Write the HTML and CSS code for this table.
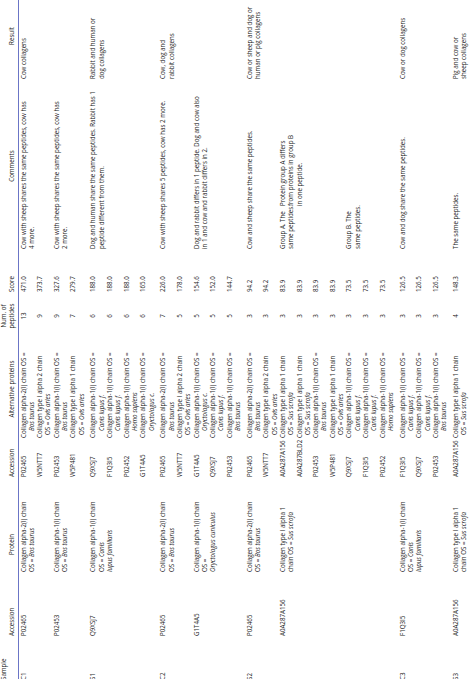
FILE: index.html
```html
<!DOCTYPE html>
<html>
<head>
<meta charset="utf-8">
<link rel="stylesheet" href="styles.css">
</head>
<body>
<div class="sheet">
<div class="rot">
<table class="tbl">
<colgroup>
<col class="c-sample"><col class="c-acc"><col class="c-prot"><col class="c-altacc"><col class="c-altprot"><col class="c-num"><col class="c-score"><col class="c-cma"><col class="c-cmb"><col class="c-res">
</colgroup>
<thead>
<tr>
<th class="h-sample">Sample</th>
<th>Accession</th>
<th class="h-prot">Protein</th>
<th>Accession</th>
<th class="h-center">Alternative proteins</th>
<th class="h-center">Num. of<br>peptides</th>
<th>Score</th>
<th class="h-center" colspan="2">Comments</th>
<th class="h-center">Result</th>
</tr>
</thead>
<tbody>
<!-- C1 -->
<tr class="first">
<td rowspan="4">C1</td>
<td rowspan="2">P02465</td>
<td rowspan="2">Collagen alpha-2(I) chain<br>OS = <i>Bos taurus</i></td>
<td>P02465</td>
<td class="alt">Collagen alpha-2(I) chain OS =<br><span class="sp"><i>Bos taurus</i></span></td>
<td class="num">13</td><td>471.0</td>
<td colspan="2" rowspan="2">Cow with sheep shares the same peptides, cow has<br>4 more.</td>
<td rowspan="4">Cow collagens</td>
</tr>
<tr><td>W5NTT7</td><td class="alt">Collagen type I alpha 2 chain<br>OS = <i>Ovis aries</i></td><td class="num">9</td><td>373.7</td></tr>
<tr>
<td rowspan="2">P02453</td>
<td rowspan="2">Collagen alpha-1(I) chain<br>OS = <i>Bos taurus</i></td>
<td>P02453</td><td class="alt">Collagen alpha-1(I) chain OS =<br><span class="sp"><i>Bos taurus</i></span></td><td class="num">9</td><td>327.6</td>
<td colspan="2" rowspan="2">Cow with sheep shares the same peptides, cow has<br>2 more.</td>
</tr>
<tr><td>W5P481</td><td class="alt">Collagen type I alpha 1 chain<br>OS = <i>Ovis aries</i></td><td class="num">7</td><td>279.7</td></tr>
<!-- S1 -->
<tr class="g">
<td rowspan="4">S1</td>
<td rowspan="4">Q9XSJ7</td>
<td rowspan="4">Collagen alpha-1(I) chain<br>OS = <i>Canis</i><br><i>lupus familiaris</i></td>
<td>Q9XSJ7</td><td class="alt">Collagen alpha-1(I) chain OS =<br><span class="sp"><i>Canis lupus f.</i></span></td><td class="num">6</td><td>188.0</td>
<td colspan="2" rowspan="4">Dog and human share the same peptides. Rabbit has 1<br>peptide different from them.</td>
<td rowspan="4">Rabbit and human or<br>dog collagens</td>
</tr>
<tr><td>F1Q3I5</td><td class="alt">Collagen alpha-1(I) chain OS =<br><span class="sp"><i>Canis lupus f.</i></span></td><td class="num">6</td><td>188.0</td></tr>
<tr><td>P02452</td><td class="alt">Collagen alpha-1(I) chain OS =<br><span class="sp"><i>Homo sapiens</i></span></td><td class="num">6</td><td>188.0</td></tr>
<tr><td>G1T4A5</td><td class="alt">Collagen alpha-1(I) chain OS =<br><span class="sp"><i>Oryctolagus c.</i></span></td><td class="num">6</td><td>165.0</td></tr>
<!-- C2 -->
<tr class="g">
<td rowspan="5">C2</td>
<td rowspan="2">P02465</td>
<td rowspan="2">Collagen alpha-2(I) chain<br>OS = <i>Bos taurus</i></td>
<td>P02465</td><td class="alt">Collagen alpha-2(I) chain OS =<br><span class="sp"><i>Bos taurus</i></span></td><td class="num">7</td><td>226.0</td>
<td colspan="2" rowspan="2">Cow with sheep shares 5 peptides, cow has 2 more.</td>
<td rowspan="5">Cow, dog and<br>rabbit collagens</td>
</tr>
<tr><td>W5NTT7</td><td class="alt">Collagen type I alpha 2 chain<br>OS = <i>Ovis aries</i></td><td class="num">5</td><td>178.0</td></tr>
<tr>
<td rowspan="3">G1T4A5</td>
<td rowspan="3">Collagen alpha-1(I) chain<br>OS =<br><i>Oryctolagus cuniculus</i></td>
<td>G1T4A5</td><td class="alt">Collagen alpha-1(I) chain OS =<br><span class="sp"><i>Oryctolagus c.</i></span></td><td class="num">5</td><td>154.6</td>
<td colspan="2" rowspan="3">Dog and rabbit differs in 1 peptide. Dog and cow also<br>in 1 and cow and rabbit differs in 2.</td>
</tr>
<tr><td>Q9XSJ7</td><td class="alt">Collagen alpha-1(I) chain OS =<br><span class="sp"><i>Canis lupus f.</i></span></td><td class="num">5</td><td>152.0</td></tr>
<tr><td>P02453</td><td class="alt">Collagen alpha-1(I) chain OS =<br><span class="sp"><i>Bos taurus</i></span></td><td class="num">5</td><td>144.7</td></tr>
<!-- S2 -->
<tr class="g">
<td rowspan="9">S2</td>
<td rowspan="2">P02465</td>
<td rowspan="2">Collagen alpha-2(I) chain<br>OS = <i>Bos taurus</i></td>
<td>P02465</td><td class="alt">Collagen alpha-2(I) chain OS =<br><span class="sp"><i>Bos taurus</i></span></td><td class="num">3</td><td>94.2</td>
<td colspan="2" rowspan="2">Cow and sheep share the same peptides.</td>
<td rowspan="9">Cow or sheep and dog or<br>human or pig collagens</td>
</tr>
<tr><td>W5NTT7</td><td class="alt">Collagen type I alpha 2 chain<br>OS = <i>Ovis aries</i></td><td class="num">3</td><td>94.2</td></tr>
<tr>
<td rowspan="7">A0A287A156</td>
<td rowspan="7">Collagen type I alpha 1<br>chain OS = <i>Sus scrofa</i></td>
<td>A0A287A156</td><td class="alt">Collagen type I alpha 1 chain<br>OS = <i>Sus scrofa</i></td><td class="num">3</td><td>83.9</td>
<td rowspan="4">Group A. The<br>same peptides.</td>
<td rowspan="7">Protein group A differs<br>from proteins in group B<br>in one peptide.</td>
</tr>
<tr><td>A0A287BLD2</td><td class="alt">Collagen type I alpha 1 chain<br>OS = <i>Sus scrofa</i></td><td class="num">3</td><td>83.9</td></tr>
<tr><td>P02453</td><td class="alt">Collagen alpha-1(I) chain OS =<br><span class="sp"><i>Bos taurus</i></span></td><td class="num">3</td><td>83.9</td></tr>
<tr><td>W5P481</td><td class="alt">Collagen type I alpha 1 chain<br>OS = <i>Ovis aries</i></td><td class="num">3</td><td>83.9</td></tr>
<tr><td>Q9XSJ7</td><td class="alt">Collagen alpha-1(I) chain OS =<br><span class="sp"><i>Canis lupus f.</i></span></td><td class="num">3</td><td>73.5</td>
<td rowspan="3">Group B. The<br>same peptides.</td>
</tr>
<tr><td>F1Q3I5</td><td class="alt">Collagen alpha-1(I) chain OS =<br><span class="sp"><i>Canis lupus f.</i></span></td><td class="num">3</td><td>73.5</td></tr>
<tr><td>P02452</td><td class="alt">Collagen alpha-1(I) chain OS =<br><span class="sp"><i>Homo sapiens</i></span></td><td class="num">3</td><td>73.5</td></tr>
<!-- C3 -->
<tr class="g">
<td rowspan="3">C3</td>
<td rowspan="3">F1Q3I5</td>
<td rowspan="3">Collagen alpha-1(I) chain<br>OS = <i>Canis</i><br><i>lupus familiaris</i></td>
<td>F1Q3I5</td><td class="alt">Collagen alpha-1(I) chain OS =<br><span class="sp"><i>Canis lupus f.</i></span></td><td class="num">3</td><td>126.5</td>
<td colspan="2" rowspan="3">Cow and dog share the same peptides.</td>
<td rowspan="3">Cow or dog collagens</td>
</tr>
<tr><td>Q9XSJ7</td><td class="alt">Collagen alpha-1(I) chain OS =<br><span class="sp"><i>Canis lupus f.</i></span></td><td class="num">3</td><td>126.5</td></tr>
<tr><td>P02453</td><td class="alt">Collagen alpha-1(I) chain OS =<br><span class="sp"><i>Bos taurus</i></span></td><td class="num">3</td><td>126.5</td></tr>
<!-- S3 -->
<tr class="g">
<td>S3</td>
<td>A0A287A156</td>
<td>Collagen type I alpha 1<br>chain OS = <i>Sus scrofa</i></td>
<td>A0A287A156</td><td class="alt">Collagen type I alpha 1 chain<br>OS = <i>Sus scrofa</i></td><td class="num">4</td><td>148.3</td>
<td colspan="2">The same peptides.</td>
<td>Pig and cow or<br>sheep collagens</td>
</tr>
</tbody>
</table>
</div>
</div>
</body>
</html>
```
FILE: styles.css
```css
html, body {
  margin: 0;
  padding: 0;
  background: #ffffff;
}
body {
  overflow: hidden;
}
.sheet {
  width: 474px;
  height: 679px;
  overflow: hidden;
}
.rot {
  width: 679px;
  height: 474px;
  transform-origin: 0 0;
  transform: translateY(679px) rotate(-90deg);
}
.tbl {
  border-collapse: collapse;
  table-layout: fixed;
  width: 691px;
  margin: -1px 0 0 -4px;
  font-family: "Open Sans", "Noto Sans", sans-serif;
  font-size: 6.2px;
  line-height: 8.3px;
  color: #1e1e1e;
}
.c-sample { width: 44px; }
.c-acc { width: 64px; }
.c-prot { width: 95px; }
.c-altacc { width: 39px; }
.c-altprot { width: 102px; }
.c-num { width: 44px; }
.c-score { width: 43px; }
.c-cma { width: 43px; }
.c-cmb { width: 127px; }
.c-res { width: 90px; }
.tbl th,
.tbl td {
  padding: 0 2px;
  vertical-align: top;
  text-align: left;
  font-weight: normal;
  white-space: nowrap;
}
.tbl thead th {
  vertical-align: bottom;
  padding-bottom: 1px;
  border-bottom: 1px solid #6b75c6;
}
.tbl thead th.h-sample {
  vertical-align: top;
}
.tbl thead th.h-prot {
  padding-left: 19px;
}
.tbl thead th.h-center {
  text-align: center;
}
.tbl tr.first > td {
  padding-top: 1px;
}
.tbl tr.g > td {
  padding-top: 3.5px;
}
.tbl td.num {
  text-align: center;
}
.tbl td.alt {
  padding-left: 5px;
  text-indent: -3px;
}
.sp {
  padding-left: 4px;
}
i {
  font-style: italic;
}
```
